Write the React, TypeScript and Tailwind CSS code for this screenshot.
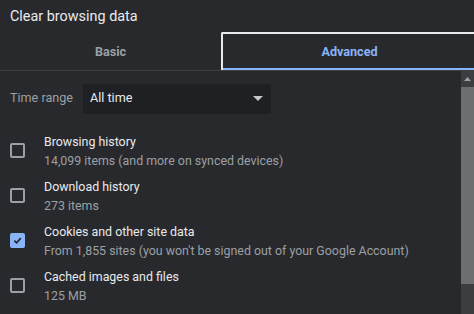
import React from "react";

const items = [
  { title: "Browsing history", sub: "14,099 items (and more on synced devices)", checked: false },
  { title: "Download history", sub: "273 items", checked: false },
  { title: "Cookies and other site data", sub: "From 1,855 sites (you won't be signed out of your Google Account)", checked: true },
  { title: "Cached images and files", sub: "125 MB", checked: false },
];

function Checkbox({ checked }: { checked: boolean }) {
  if (checked) {
    return (
      <div className="w-[15px] h-[15px] rounded-[2px] bg-[#8ab4f8] flex items-center justify-center">
        <svg width="11" height="11" viewBox="0 0 12 12">
          <path d="M2.5 6.2 L5 8.6 L9.6 3.4" fill="none" stroke="#202124" strokeWidth="1.7" />
        </svg>
      </div>
    );
  }
  return <div className="w-[15px] h-[15px] rounded-[2px] border-2 border-[#9aa0a6]" />;
}

export default function App() {
  return (
    <div className="w-[474px] h-[314px] overflow-hidden bg-[#28292c] text-[#e8eaed] font-['Roboto',sans-serif] flex flex-col">
      <div className="h-[32px] pl-[10px] pt-[7px] text-[14.4px] leading-[20px]">Clear browsing data</div>
      <div className="flex h-[39px] border-b border-[#3c4043]">
        <div className="w-[221px] flex items-center justify-center pt-[3px] text-[12.6px] font-bold text-[#9aa0a6]">Basic</div>
        <div className="flex-1 -mr-[4px] border-2 border-b-0 border-[#e8eaed] rounded-tl-[2px] flex items-center justify-center pt-[1px] text-[12.6px] font-bold text-[#8ab4f8] shadow-[inset_0_-2px_0_#8ab4f8]">
          Advanced
        </div>
      </div>
      <div className="flex flex-1 min-h-0">
        <div className="flex-1 flex flex-col">
          <div className="flex items-center h-[43px] pt-[12px] pl-[10px]">
            <span className="w-[73px] text-[12.6px] text-[#9aa0a6]">Time range</span>
            <div className="w-[188px] h-[30px] bg-[#1f2023] rounded-[2px] flex items-center justify-between pl-[7px] pr-[8px] text-[12.6px] text-[#e8eaed]">
              <span>All time</span>
              <svg width="10" height="6" viewBox="0 0 10 6">
                <path d="M0 0 L10 0 L5 5 Z" fill="#c4c7c9" />
              </svg>
            </div>
          </div>
          <div className="flex flex-col pt-[14px]">
            {items.map((it) => (
              <div key={it.title} className="flex items-center h-[45px] pl-[10px]">
                <div className="w-[34px]">
                  <Checkbox checked={it.checked} />
                </div>
                <div className="flex flex-col text-[12.4px] leading-[19px] whitespace-nowrap">
                  <span className="text-[#e8eaed]">{it.title}</span>
                  <span className="text-[#9aa0a6]">{it.sub}</span>
                </div>
              </div>
            ))}
          </div>
        </div>
        <div className="w-[13px] flex flex-col bg-[#3c3d40]">
          <div className="h-[16px] flex items-center justify-center">
            <svg width="7" height="4" viewBox="0 0 7 4">
              <path d="M0 4 L7 4 L3.5 0 Z" fill="#9aa0a6" />
            </svg>
          </div>
          <div className="h-[197px] bg-[#6d6e70]" />
        </div>
      </div>
    </div>
  );
}
